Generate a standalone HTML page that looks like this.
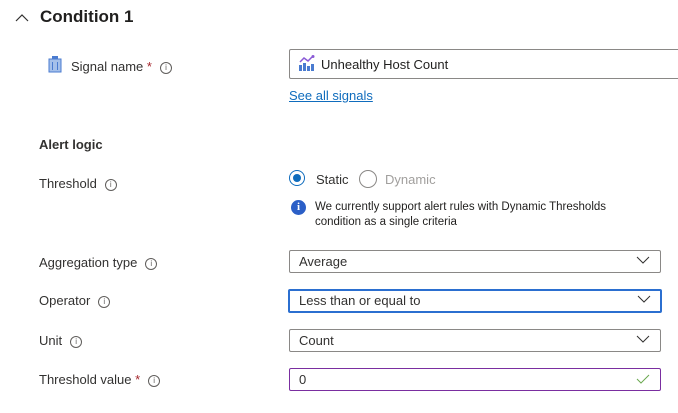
<!DOCTYPE html>
<html><head><style>
body{margin:0;width:678px;height:413px;background:#fff;font-family:"Liberation Sans",sans-serif;font-size:13px;color:#323130;position:relative;overflow:hidden}
.a{position:absolute;white-space:nowrap}
.i{display:inline-block;width:10px;height:10px;border:1px solid #605e5c;border-radius:50%;font-size:8px;line-height:10px;text-align:center;color:#605e5c;vertical-align:middle;margin-left:8px}
.star{color:#a4262c}
.box{position:absolute;left:289px;width:370px;height:21px;border:1px solid #8a8886;border-radius:2px}
.box span{position:absolute;left:9px;top:3px}
.chev{position:absolute;right:10px;top:4px}
</style></head><body>
<svg class="a" style="left:15px;top:13px" width="14" height="10"><path d="M1 8 L7 2 L13 8" fill="none" stroke="#323130" stroke-width="1.2"/></svg>
<div class="a" style="left:40px;top:7px;font-size:17px;font-weight:bold;color:#201f1e">Condition 1</div>
<svg class="a" style="left:48px;top:56px" width="14" height="17"><rect x="1" y="3" width="12" height="13" fill="#a5c0ea" stroke="#4a7bd0"/><rect x="4" y="0" width="6" height="3" fill="#4a7bd0"/><rect x="4" y="6" width="1" height="8" fill="#4a7bd0"/><rect x="9" y="6" width="1" height="8" fill="#4a7bd0"/></svg>
<div class="a" style="left:71px;top:59px">Signal name <span class="star">*</span><span class="i">i</span></div>
<div class="a" style="left:289px;top:49px;width:400px;height:28px;border:1px solid #8a8886;border-radius:2px"></div>
<svg class="a" style="left:298px;top:55px" width="17" height="17"><rect x="1" y="10" width="3" height="6" fill="#4a7bd0"/><rect x="5" y="8" width="3" height="8" fill="#4a7bd0"/><rect x="9" y="11" width="3" height="5" fill="#4a7bd0"/><rect x="13" y="9" width="3" height="7" fill="#4a7bd0"/><path d="M2 7 L6 3 L10 6 L15 1" fill="none" stroke="#8a5ad6" stroke-width="1.5"/><circle cx="15" cy="1.5" r="1.5" fill="#8a5ad6"/></svg>
<div class="a" style="left:321px;top:57px;color:#201f1e">Unhealthy Host Count</div>
<div class="a" style="left:289px;top:88px;color:#0f6cbd;text-decoration:underline">See all signals</div>
<div class="a" style="left:39px;top:137px;font-weight:bold">Alert logic</div>
<div class="a" style="left:39px;top:176px">Threshold<span class="i">i</span></div>
<div class="a" style="left:289px;top:170px;width:16px;height:16px;border:1px solid #0f6cbd;border-radius:50%;box-sizing:border-box"><div style="position:absolute;left:3px;top:3px;width:8px;height:8px;border-radius:50%;background:#0f6cbd"></div></div>
<div class="a" style="left:316px;top:172px">Static</div>
<div class="a" style="left:359px;top:170px;width:18px;height:18px;border:1px solid #8a8886;border-radius:50%;box-sizing:border-box"></div>
<div class="a" style="left:385px;top:172px;color:#a19f9d">Dynamic</div>
<div class="a" style="left:291px;top:200px;width:15px;height:15px;border-radius:50%;background:#2b5fc7;color:#fff;font-weight:bold;font-size:11px;text-align:center;line-height:15px;font-family:'Liberation Serif',serif">i</div>
<div class="a" style="left:315px;top:200px;font-size:11.5px;line-height:15px;color:#201f1e">We currently support alert rules with Dynamic Thresholds<br>condition as a single criteria</div>
<div class="a" style="left:39px;top:255px">Aggregation type<span class="i">i</span></div>
<div class="a" style="left:39px;top:293px">Operator<span class="i">i</span></div>
<div class="a" style="left:39px;top:333px">Unit<span class="i">i</span></div>
<div class="a" style="left:39px;top:372px">Threshold value <span class="star">*</span><span class="i">i</span></div>
<div class="box" style="top:250px"><span>Average</span><svg class="chev" width="14" height="10"><path d="M1 2 L7 8 L13 2" fill="none" stroke="#323130"/></svg></div>
<div class="box" style="top:289px;border:2px solid #2b6fd0;left:288px;height:20px"><span style="left:9px;top:2px">Less than or equal to</span><svg class="chev" style="right:9px;top:3px" width="14" height="10"><path d="M1 2 L7 8 L13 2" fill="none" stroke="#323130"/></svg></div>
<div class="box" style="top:329px"><span>Count</span><svg class="chev" width="14" height="10"><path d="M1 2 L7 8 L13 2" fill="none" stroke="#323130"/></svg></div>
<div class="box" style="top:368px;border-color:#7a2ea0"><span>0</span><svg class="chev" width="14" height="12"><path d="M1 6 L5 10 L13 2" fill="none" stroke="#6aa84f"/></svg></div>
</body></html>
